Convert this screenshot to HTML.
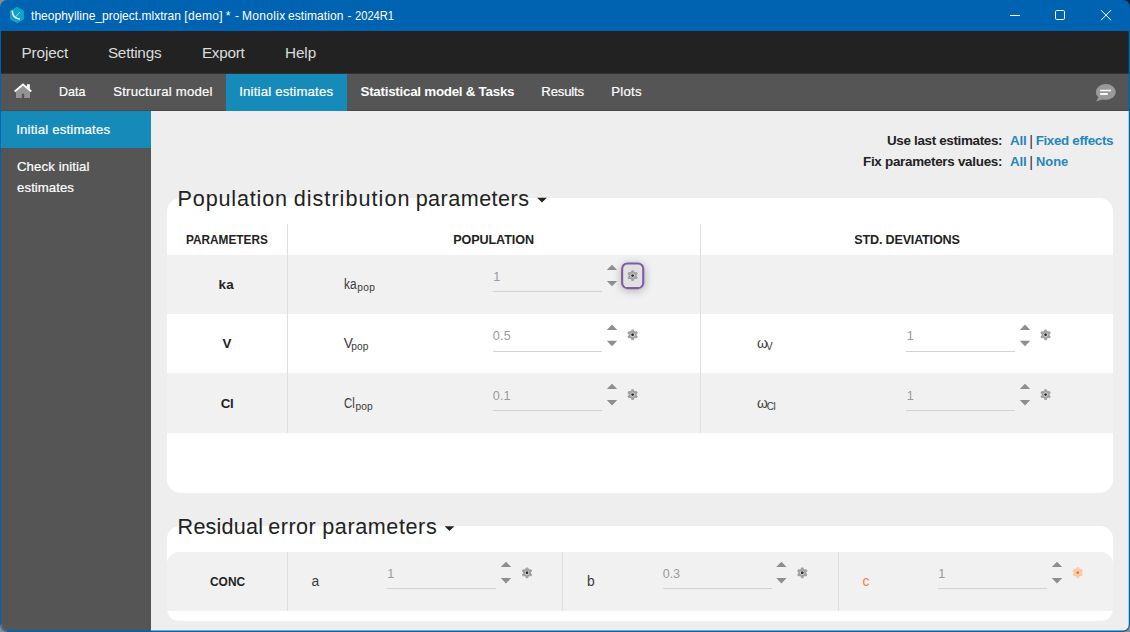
<!DOCTYPE html><html><head><meta charset="utf-8"><title>Monolix</title><style>
html,body{margin:0;padding:0;}
body{width:1130px;height:632px;overflow:hidden;background:#8c8c8c;font-family:"Liberation Sans", sans-serif;position:relative;}
#win{position:absolute;left:0;top:0;width:1130px;height:632px;background:#0063b1;border-radius:7px 7px 8px 8px;overflow:hidden;}
#win div,#win svg,#win span{position:absolute;}
.t{white-space:nowrap;line-height:1;}
.ul{height:1px;background:#d2d2d2;}
.vs{width:1px;background:#dcdfe3;}
</style></head><body>
<div style="position:absolute;left:1100px;top:0;width:30px;height:20px;background:#1b2023"></div>
<div id="win">
<div style="left:1px;top:31px;width:1128px;height:43px;background:#222"></div>
<div style="left:1px;top:73px;width:1128px;height:1px;background:#333"></div>
<div style="left:1px;top:74px;width:1128px;height:37px;background:#555"></div>
<div style="left:1px;top:110px;width:1128px;height:1px;background:#4a4a4a"></div>
<div style="left:226px;top:74px;width:121px;height:37px;background:#168bba"></div>
<div style="left:1px;top:111px;width:1128px;height:520px;background:#eee;border-radius:0 0 7px 7px"></div>
<div style="left:1px;top:111px;width:150px;height:520px;background:#555;border-radius:0 0 0 7px"></div>
<div style="left:1px;top:111px;width:150px;height:37px;background:#168bba"></div>
<div style="left:1128px;top:31px;width:1px;height:600px;background:rgba(0,99,177,.25)"></div>
<div style="left:1px;top:630px;width:1128px;height:1px;background:rgba(0,99,177,.5)"></div>
<svg style="left:9px;top:6px" width="16" height="18" viewBox="0 0 16 18"><path d="M8 0.8 L15 4.8 L15 13.2 L8 17.2 L1 13.2 L1 4.8Z" fill="#10a3c6"/><path d="M3.3 5.3 C3.6 9.5 5.6 12.4 10.3 13.1" stroke="#fff" stroke-width="1.5" fill="none" stroke-linecap="round"/><path d="M5.8 11.6 L10.8 6.2" stroke="#c8eef7" stroke-width="0.7"/></svg>
<svg style="left:1000px;top:0" width="130" height="31" viewBox="0 0 130 31"><g stroke="#fff" stroke-width="1" fill="none"><path d="M10 15.5H20"/><rect x="55.5" y="10.5" width="9" height="9" rx="1.2"/><path d="M101 10.2L111 20.2M111 10.2L101 20.2"/></g></svg>
<svg style="left:13px;top:82px" width="20" height="17" viewBox="0 0 20 17"><path d="M3 9.4 L10 3.6 L17 9.4 V16 H11.2 V11.8 H8.8 V16 H3Z" fill="#939393"/><path d="M13.9 2.2h2.9v5.2l-2.9-2.5z" fill="#fff"/><path d="M1.7 9.4 L10 2.5 L18.3 9.4" stroke="#fff" stroke-width="1.9" fill="none"/></svg>
<svg style="left:1094px;top:82px" width="24" height="22" viewBox="0 0 24 22"><ellipse cx="11.8" cy="10" rx="10" ry="7.9" fill="#9a9a9a"/><path d="M5 14.5 L2 19.4 L10 17Z" fill="#9a9a9a"/><path d="M6.2 8.5H17" stroke="#fff" stroke-width="1.4"/><path d="M6.2 12H13.7" stroke="#fff" stroke-width="2"/></svg>
<div style="left:167px;top:198px;width:946px;height:295px;background:#fff;border-radius:14px"></div>
<div style="left:167px;top:255px;width:946px;height:59px;background:#f1f1f1"></div>
<div style="left:167px;top:373px;width:946px;height:60px;background:#f1f1f1"></div>
<div class="vs" style="left:287px;top:224px;height:209px"></div>
<div class="vs" style="left:700px;top:224px;height:209px"></div>
<div style="left:167px;top:526px;width:946px;height:95px;background:#fff;border-radius:13px 13px 12px 12px"></div>
<div style="left:167px;top:552px;width:946px;height:59px;background:#f1f1f1;border-radius:12px 12px 0 0"></div>
<div class="vs" style="left:287px;top:552px;height:59px"></div>
<div class="vs" style="left:562px;top:552px;height:59px"></div>
<div class="vs" style="left:838px;top:552px;height:59px"></div>
<div class="ul" style="left:493px;top:291px;width:109px"></div>
<div class="ul" style="left:493px;top:351px;width:109px"></div>
<div class="ul" style="left:493px;top:410px;width:109px"></div>
<div class="ul" style="left:906px;top:351px;width:109px"></div>
<div class="ul" style="left:906px;top:410px;width:109px"></div>
<div class="ul" style="left:387px;top:588px;width:109px"></div>
<div class="ul" style="left:663px;top:588px;width:109px"></div>
<div class="ul" style="left:938px;top:588px;width:109px"></div>
<div style="left:622px;top:263.5px;width:21.5px;height:25px;border-radius:6px;box-shadow:0 1px 8px 1px rgba(0,0,0,.26)"></div>
<svg style="left:0;top:0" width="1130" height="632" viewBox="0 0 1130 632"><path d="M537.2 197.8H546.8L542 202.6Z" fill="#222"/><path d="M444.7 526.3H454.3L449.5 531.1Z" fill="#222"/><rect x="622.15" y="263.45" width="21.1" height="24.7" rx="5.2" fill="#e1e1e1" stroke="#7b5ca7" stroke-width="2.1"/><path transform="translate(606 263.7)" d="M0.8 6.3 L6 1 L11.2 6.3Z M0.8 17.2 L6 22.6 L11.2 17.2Z" fill="#8e8e8e"/><path transform="translate(606 323.6)" d="M0.8 6.3 L6 1 L11.2 6.3Z M0.8 17.2 L6 22.6 L11.2 17.2Z" fill="#8e8e8e"/><path transform="translate(606 382.8)" d="M0.8 6.3 L6 1 L11.2 6.3Z M0.8 17.2 L6 22.6 L11.2 17.2Z" fill="#8e8e8e"/><path transform="translate(1019 323.6)" d="M0.8 6.3 L6 1 L11.2 6.3Z M0.8 17.2 L6 22.6 L11.2 17.2Z" fill="#8e8e8e"/><path transform="translate(1019 382.8)" d="M0.8 6.3 L6 1 L11.2 6.3Z M0.8 17.2 L6 22.6 L11.2 17.2Z" fill="#8e8e8e"/><path transform="translate(500 560.8)" d="M0.8 6.3 L6 1 L11.2 6.3Z M0.8 17.2 L6 22.6 L11.2 17.2Z" fill="#8e8e8e"/><path transform="translate(775.4 560.8)" d="M0.8 6.3 L6 1 L11.2 6.3Z M0.8 17.2 L6 22.6 L11.2 17.2Z" fill="#8e8e8e"/><path transform="translate(1051 560.8)" d="M0.8 6.3 L6 1 L11.2 6.3Z M0.8 17.2 L6 22.6 L11.2 17.2Z" fill="#8e8e8e"/><g transform="translate(632.6 275.6)"><g fill="#a2a2a2"><rect x="-1.4" y="-5.4" width="2.8" height="3.2" rx="0.8" transform="rotate(0)"/><rect x="-1.4" y="-5.4" width="2.8" height="3.2" rx="0.8" transform="rotate(60)"/><rect x="-1.4" y="-5.4" width="2.8" height="3.2" rx="0.8" transform="rotate(120)"/><rect x="-1.4" y="-5.4" width="2.8" height="3.2" rx="0.8" transform="rotate(180)"/><rect x="-1.4" y="-5.4" width="2.8" height="3.2" rx="0.8" transform="rotate(240)"/><rect x="-1.4" y="-5.4" width="2.8" height="3.2" rx="0.8" transform="rotate(300)"/><circle r="4"/></g><circle r="2" fill="#fff"/><circle r="1.45" fill="#2a2a35"/></g><g transform="translate(632.6 334.8)"><g fill="#a2a2a2"><rect x="-1.4" y="-5.4" width="2.8" height="3.2" rx="0.8" transform="rotate(0)"/><rect x="-1.4" y="-5.4" width="2.8" height="3.2" rx="0.8" transform="rotate(60)"/><rect x="-1.4" y="-5.4" width="2.8" height="3.2" rx="0.8" transform="rotate(120)"/><rect x="-1.4" y="-5.4" width="2.8" height="3.2" rx="0.8" transform="rotate(180)"/><rect x="-1.4" y="-5.4" width="2.8" height="3.2" rx="0.8" transform="rotate(240)"/><rect x="-1.4" y="-5.4" width="2.8" height="3.2" rx="0.8" transform="rotate(300)"/><circle r="4"/></g><circle r="2" fill="#fff"/><circle r="1.45" fill="#2a2a35"/></g><g transform="translate(632.6 394.6)"><g fill="#a2a2a2"><rect x="-1.4" y="-5.4" width="2.8" height="3.2" rx="0.8" transform="rotate(0)"/><rect x="-1.4" y="-5.4" width="2.8" height="3.2" rx="0.8" transform="rotate(60)"/><rect x="-1.4" y="-5.4" width="2.8" height="3.2" rx="0.8" transform="rotate(120)"/><rect x="-1.4" y="-5.4" width="2.8" height="3.2" rx="0.8" transform="rotate(180)"/><rect x="-1.4" y="-5.4" width="2.8" height="3.2" rx="0.8" transform="rotate(240)"/><rect x="-1.4" y="-5.4" width="2.8" height="3.2" rx="0.8" transform="rotate(300)"/><circle r="4"/></g><circle r="2" fill="#fff"/><circle r="1.45" fill="#2a2a35"/></g><g transform="translate(1045.6 334.8)"><g fill="#a2a2a2"><rect x="-1.4" y="-5.4" width="2.8" height="3.2" rx="0.8" transform="rotate(0)"/><rect x="-1.4" y="-5.4" width="2.8" height="3.2" rx="0.8" transform="rotate(60)"/><rect x="-1.4" y="-5.4" width="2.8" height="3.2" rx="0.8" transform="rotate(120)"/><rect x="-1.4" y="-5.4" width="2.8" height="3.2" rx="0.8" transform="rotate(180)"/><rect x="-1.4" y="-5.4" width="2.8" height="3.2" rx="0.8" transform="rotate(240)"/><rect x="-1.4" y="-5.4" width="2.8" height="3.2" rx="0.8" transform="rotate(300)"/><circle r="4"/></g><circle r="2" fill="#fff"/><circle r="1.45" fill="#2a2a35"/></g><g transform="translate(1045.6 394.6)"><g fill="#a2a2a2"><rect x="-1.4" y="-5.4" width="2.8" height="3.2" rx="0.8" transform="rotate(0)"/><rect x="-1.4" y="-5.4" width="2.8" height="3.2" rx="0.8" transform="rotate(60)"/><rect x="-1.4" y="-5.4" width="2.8" height="3.2" rx="0.8" transform="rotate(120)"/><rect x="-1.4" y="-5.4" width="2.8" height="3.2" rx="0.8" transform="rotate(180)"/><rect x="-1.4" y="-5.4" width="2.8" height="3.2" rx="0.8" transform="rotate(240)"/><rect x="-1.4" y="-5.4" width="2.8" height="3.2" rx="0.8" transform="rotate(300)"/><circle r="4"/></g><circle r="2" fill="#fff"/><circle r="1.45" fill="#2a2a35"/></g><g transform="translate(527 572.8)"><g fill="#a2a2a2"><rect x="-1.4" y="-5.4" width="2.8" height="3.2" rx="0.8" transform="rotate(0)"/><rect x="-1.4" y="-5.4" width="2.8" height="3.2" rx="0.8" transform="rotate(60)"/><rect x="-1.4" y="-5.4" width="2.8" height="3.2" rx="0.8" transform="rotate(120)"/><rect x="-1.4" y="-5.4" width="2.8" height="3.2" rx="0.8" transform="rotate(180)"/><rect x="-1.4" y="-5.4" width="2.8" height="3.2" rx="0.8" transform="rotate(240)"/><rect x="-1.4" y="-5.4" width="2.8" height="3.2" rx="0.8" transform="rotate(300)"/><circle r="4"/></g><circle r="2" fill="#fff"/><circle r="1.45" fill="#2a2a35"/></g><g transform="translate(802.3 572.8)"><g fill="#a2a2a2"><rect x="-1.4" y="-5.4" width="2.8" height="3.2" rx="0.8" transform="rotate(0)"/><rect x="-1.4" y="-5.4" width="2.8" height="3.2" rx="0.8" transform="rotate(60)"/><rect x="-1.4" y="-5.4" width="2.8" height="3.2" rx="0.8" transform="rotate(120)"/><rect x="-1.4" y="-5.4" width="2.8" height="3.2" rx="0.8" transform="rotate(180)"/><rect x="-1.4" y="-5.4" width="2.8" height="3.2" rx="0.8" transform="rotate(240)"/><rect x="-1.4" y="-5.4" width="2.8" height="3.2" rx="0.8" transform="rotate(300)"/><circle r="4"/></g><circle r="2" fill="#fff"/><circle r="1.45" fill="#2a2a35"/></g><g transform="translate(1077.8 572.6)"><g fill="#f9c9a3"><rect x="-1.4" y="-5.4" width="2.8" height="3.2" rx="0.8" transform="rotate(0)"/><rect x="-1.4" y="-5.4" width="2.8" height="3.2" rx="0.8" transform="rotate(60)"/><rect x="-1.4" y="-5.4" width="2.8" height="3.2" rx="0.8" transform="rotate(120)"/><rect x="-1.4" y="-5.4" width="2.8" height="3.2" rx="0.8" transform="rotate(180)"/><rect x="-1.4" y="-5.4" width="2.8" height="3.2" rx="0.8" transform="rotate(240)"/><rect x="-1.4" y="-5.4" width="2.8" height="3.2" rx="0.8" transform="rotate(300)"/><circle r="4"/></g><circle r="2" fill="#fde6d3"/><circle r="1.45" fill="#ff6a14"/></g></svg>
<span class="t" style="left:31.07px;top:10.10px;font-size:12px;font-weight:400;color:#fff;letter-spacing:0.018px;">theophylline_project.mlxtran</span>
<span class="t" style="left:184.18px;top:10.10px;font-size:12px;font-weight:400;color:#fff;letter-spacing:0.370px;">[demo]</span>
<span class="t" style="left:225.65px;top:10.10px;font-size:12px;font-weight:400;color:#fff;">*</span>
<span class="t" style="left:234.97px;top:10.10px;font-size:12px;font-weight:400;color:#fff;">-</span>
<span class="t" style="left:241.94px;top:10.10px;font-size:12px;font-weight:400;color:#fff;letter-spacing:0.319px;">Monolix</span>
<span class="t" style="left:288.06px;top:10.10px;font-size:12px;font-weight:400;color:#fff;letter-spacing:0.077px;">estimation</span>
<span class="t" style="left:347.52px;top:10.10px;font-size:12px;font-weight:400;color:#fff;">-</span>
<span class="t" style="left:355.44px;top:10.10px;font-size:12px;font-weight:400;color:#fff;transform:scaleX(0.9289);transform-origin:0 0;">2024R1</span>
<span class="t" style="left:21.53px;top:45.10px;font-size:15.3px;font-weight:400;color:#dcdcdc;letter-spacing:-0.147px;">Project</span>
<span class="t" style="left:107.89px;top:45.10px;font-size:15.3px;font-weight:400;color:#dcdcdc;letter-spacing:-0.224px;">Settings</span>
<span class="t" style="left:201.93px;top:45.10px;font-size:15.3px;font-weight:400;color:#dcdcdc;letter-spacing:-0.282px;">Export</span>
<span class="t" style="left:284.93px;top:45.10px;font-size:15.3px;font-weight:400;color:#dcdcdc;letter-spacing:-0.069px;">Help</span>
<span class="t" style="left:58.90px;top:85.10px;font-size:13.2px;font-weight:400;color:#fff;transform:scaleX(0.9450);transform-origin:0 0;-webkit-text-stroke:0.2px #fff;">Data</span>
<span class="t" style="left:113.17px;top:85.10px;font-size:13.2px;font-weight:400;color:#fff;letter-spacing:0.225px;-webkit-text-stroke:0.2px #fff;">Structural model</span>
<span class="t" style="left:239.27px;top:85.10px;font-size:13.2px;font-weight:400;color:#fff;letter-spacing:0.179px;-webkit-text-stroke:0.2px #fff;">Initial estimates</span>
<span class="t" style="left:360.52px;top:85.10px;font-size:13.4px;font-weight:700;color:#fff;letter-spacing:-0.271px;">Statistical model &amp; Tasks</span>
<span class="t" style="left:541.30px;top:85.10px;font-size:13.2px;font-weight:400;color:#fff;letter-spacing:-0.181px;-webkit-text-stroke:0.2px #fff;">Results</span>
<span class="t" style="left:611.30px;top:85.10px;font-size:13.2px;font-weight:400;color:#fff;letter-spacing:0.221px;-webkit-text-stroke:0.2px #fff;">Plots</span>
<span class="t" style="left:16.27px;top:123.10px;font-size:13.2px;font-weight:400;color:#fff;letter-spacing:0.179px;-webkit-text-stroke:0.2px #fff;">Initial estimates</span>
<span class="t" style="left:16.88px;top:160.10px;font-size:13.2px;font-weight:400;color:#fff;letter-spacing:0.128px;-webkit-text-stroke:0.2px #fff;">Check initial</span>
<span class="t" style="left:17.12px;top:181.10px;font-size:13.2px;font-weight:400;color:#fff;letter-spacing:0.050px;-webkit-text-stroke:0.2px #fff;">estimates</span>
<span class="t" style="left:886.99px;top:134.10px;font-size:13.4px;font-weight:700;color:#222;letter-spacing:-0.322px;">Use last estimates:</span>
<span class="t" style="left:1010.11px;top:134.10px;font-size:13.4px;font-weight:700;color:#2587bb;letter-spacing:-0.255px;">All</span>
<span class="t" style="left:1029.36px;top:134.10px;font-size:14.5px;font-weight:400;color:#333;">|</span>
<span class="t" style="left:1035.63px;top:134.10px;font-size:13.4px;font-weight:700;color:#2587bb;letter-spacing:-0.329px;">Fixed effects</span>
<span class="t" style="left:862.99px;top:155.10px;font-size:13.4px;font-weight:700;color:#222;letter-spacing:-0.269px;">Fix parameters values:</span>
<span class="t" style="left:1010.11px;top:155.10px;font-size:13.4px;font-weight:700;color:#2587bb;letter-spacing:-0.255px;">All</span>
<span class="t" style="left:1029.36px;top:155.10px;font-size:14.5px;font-weight:400;color:#333;">|</span>
<span class="t" style="left:1035.99px;top:155.10px;font-size:13.4px;font-weight:700;color:#2587bb;transform:scaleX(0.9628);transform-origin:0 0;">None</span>
<span class="t" style="left:177.59px;top:188.10px;font-size:21.6px;font-weight:400;color:#222;letter-spacing:0.820px;">Population</span>
<span class="t" style="left:293.66px;top:188.10px;font-size:21.6px;font-weight:400;color:#222;letter-spacing:1.034px;">distribution</span>
<span class="t" style="left:415.65px;top:188.10px;font-size:21.6px;font-weight:400;color:#222;letter-spacing:0.461px;">parameters</span>
<span class="t" style="left:177.59px;top:516.10px;font-size:21.6px;font-weight:400;color:#222;letter-spacing:0.203px;">Residual</span>
<span class="t" style="left:268.25px;top:516.10px;font-size:21.6px;font-weight:400;color:#222;letter-spacing:0.486px;">error</span>
<span class="t" style="left:322.27px;top:516.10px;font-size:21.6px;font-weight:400;color:#222;letter-spacing:0.579px;">parameters</span>
<span class="t" style="left:185.59px;top:234.10px;font-size:12.6px;font-weight:700;color:#222;transform:scaleX(0.9387);transform-origin:0 0;">PARAMETERS</span>
<span class="t" style="left:453.15px;top:234.10px;font-size:12.6px;font-weight:700;color:#222;letter-spacing:-0.082px;">POPULATION</span>
<span class="t" style="left:854.34px;top:234.10px;font-size:12.6px;font-weight:700;color:#222;letter-spacing:-0.195px;">STD. DEVIATIONS</span>
<span class="t" style="left:218.61px;top:278.10px;font-size:13.4px;font-weight:700;color:#222;letter-spacing:0.203px;">ka</span>
<span class="t" style="left:222.41px;top:337.10px;font-size:13.4px;font-weight:700;color:#222;">V</span>
<span class="t" style="left:220.63px;top:397.10px;font-size:13.4px;font-weight:700;color:#222;letter-spacing:-0.333px;">Cl</span>
<span class="t" style="left:344.44px;top:278.10px;font-size:13.8px;font-weight:400;color:#3a3a3a;transform:scaleX(0.8637);transform-origin:0 0;">ka</span>
<span class="t" style="left:357.35px;top:283.10px;font-size:10.2px;font-weight:400;color:#3a3a3a;letter-spacing:0.302px;">pop</span>
<span class="t" style="left:343.69px;top:337.10px;font-size:13.8px;font-weight:400;color:#3a3a3a;">V</span>
<span class="t" style="left:351.35px;top:342.10px;font-size:10.2px;font-weight:400;color:#3a3a3a;letter-spacing:0.076px;">pop</span>
<span class="t" style="left:343.85px;top:397.10px;font-size:13.8px;font-weight:400;color:#3a3a3a;transform:scaleX(0.8234);transform-origin:0 0;">Cl</span>
<span class="t" style="left:355.47px;top:402.10px;font-size:10.2px;font-weight:400;color:#3a3a3a;letter-spacing:0.050px;">pop</span>
<span class="t" style="left:756.97px;top:337.10px;font-size:13.8px;font-weight:400;color:#3a3a3a;">ω</span>
<span class="t" style="left:766.00px;top:342.10px;font-size:10px;font-weight:400;color:#3a3a3a;">V</span>
<span class="t" style="left:756.97px;top:397.10px;font-size:13.8px;font-weight:400;color:#3a3a3a;">ω</span>
<span class="t" style="left:766.70px;top:402.10px;font-size:10px;font-weight:400;color:#3a3a3a;letter-spacing:-0.343px;">Cl</span>
<span class="t" style="left:493.28px;top:271.10px;font-size:12.6px;font-weight:400;color:#9a9a9a;">1</span>
<span class="t" style="left:492.70px;top:330.10px;font-size:12.6px;font-weight:400;color:#9a9a9a;letter-spacing:0.223px;">0.5</span>
<span class="t" style="left:492.70px;top:390.10px;font-size:12.6px;font-weight:400;color:#9a9a9a;letter-spacing:0.202px;">0.1</span>
<span class="t" style="left:906.65px;top:330.10px;font-size:12.6px;font-weight:400;color:#9a9a9a;">1</span>
<span class="t" style="left:906.66px;top:390.10px;font-size:12.6px;font-weight:400;color:#9a9a9a;">1</span>
<span class="t" style="left:209.72px;top:576.10px;font-size:12.6px;font-weight:700;color:#222;transform:scaleX(0.9467);transform-origin:0 0;">CONC</span>
<span class="t" style="left:311.39px;top:575.10px;font-size:13.8px;font-weight:400;color:#3a3a3a;">a</span>
<span class="t" style="left:586.95px;top:575.10px;font-size:13.8px;font-weight:400;color:#3a3a3a;">b</span>
<span class="t" style="left:862.61px;top:575.10px;font-size:13.8px;font-weight:400;color:#f0803c;">c</span>
<span class="t" style="left:387.28px;top:568.10px;font-size:12.6px;font-weight:400;color:#9a9a9a;">1</span>
<span class="t" style="left:662.77px;top:568.10px;font-size:12.6px;font-weight:400;color:#9a9a9a;letter-spacing:-0.098px;">0.3</span>
<span class="t" style="left:938.28px;top:568.10px;font-size:12.6px;font-weight:400;color:#9a9a9a;">1</span>
</div></body></html>
